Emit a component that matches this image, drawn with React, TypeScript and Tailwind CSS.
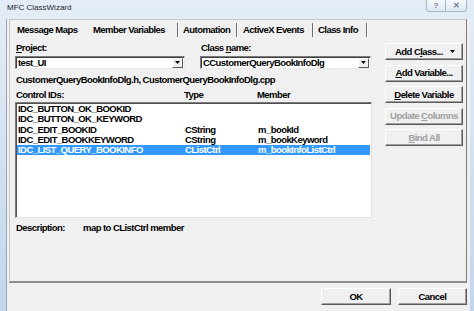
import React from "react";

const rows = [
  { id: "IDC_BUTTON_OK_BOOKID", type: "", member: "" },
  { id: "IDC_BUTTON_OK_KEYWORD", type: "", member: "" },
  { id: "IDC_EDIT_BOOKID", type: "CString", member: "m_bookId" },
  { id: "IDC_EDIT_BOOKKEYWORD", type: "CString", member: "m_bookKeyword" },
  { id: "IDC_LIST_QUERY_BOOKINFO", type: "CListCtrl", member: "m_bookInfoListCtrl", selected: true },
];

const btn =
  "flex h-[17px] items-center justify-center border border-t-white border-l-white border-b-[#5a5a5a] border-r-[#5a5a5a] bg-[#f0f0f0] shadow-[inset_-1px_-1px_0_#a0a0a0] leading-[10px]";

function Arrow() {
  return (
    <svg width="5" height="3" viewBox="0 0 5 3">
      <path d="M0 0H5L2.5 3Z" fill="#000" />
    </svg>
  );
}

function Combo({ text, w }: { text: string; w: string }) {
  return (
    <div
      className={`flex h-[13px] ${w} items-center border border-t-[#7a7a7a] border-l-[#7a7a7a] border-b-[#e8e8e8] border-r-[#e8e8e8] bg-white shadow-[inset_1px_1px_0_#404040]`}
    >
      <span className="pl-[2px] leading-[10px]">{text}</span>
      <div className="ml-auto mr-[1px] flex h-[10px] w-[11px] items-center justify-center border border-t-white border-l-white border-b-[#5a5a5a] border-r-[#5a5a5a] bg-[#f0f0f0]">
        <Arrow />
      </div>
    </div>
  );
}

function Sep() {
  return <div className="h-[14px] w-[2px] self-end border-l border-l-[#6d6d6d] border-r border-r-white" />;
}

export default function App() {
  return (
    <div className="h-[311px] w-[474px] overflow-hidden bg-gradient-to-b from-[#e4edf7] to-[#c2d6ec] font-['Liberation_Sans',Arial,sans-serif] text-black">
      {/* caption */}
      <div className="flex h-[16px] items-start">
        <div className="pl-[7px] pt-[3px] text-[8px] leading-[10px] text-[#1e1e1e]">MFC ClassWizard</div>
        <div className="ml-auto mr-[7px] flex h-[12px] rounded-b-[3px] border border-t-0 border-[#a4b5ca] bg-gradient-to-b from-[#f6f9fc] to-[#dde7f2]">
          <div className="flex w-[19px] items-center justify-center border-r border-[#a4b5ca] text-[8px] font-bold leading-[8px] text-[#6b7b90]">
            ?
          </div>
          <div className="flex w-[20px] items-center justify-center text-[8px] font-bold leading-[8px] text-[#6b7b90]">
            ✕
          </div>
        </div>
      </div>

      {/* client */}
      <div className="ml-[6px] h-[293px] w-[464px] border-b border-l border-[#9aa6b4] bg-[#f0f0f0] text-[9.5px] font-bold tracking-[-0.55px]">
        {/* property sheet panel */}
        <div className="ml-[2px] mt-[3px] h-[264px] w-[458px] border border-t-[#c8c8c8] border-l-[#c8c8c8] border-r-[#7a7a7a] border-b-2 border-b-[#8c8c8c]">
          {/* tabs */}
          <div className="flex h-[17px] items-start">
            <div className="w-[76px] pl-[7px] pt-[5px] leading-[10px]">Message Maps</div>
            <div className="w-[91px] pl-[7px] pt-[5px] leading-[10px]">Member Variables</div>
            <Sep />
            <div className="w-[57px] pl-[4px] pt-[5px] leading-[10px]">Automation</div>
            <Sep />
            <div className="w-[74px] pl-[5px] pt-[5px] leading-[10px]">ActiveX Events</div>
            <Sep />
            <div className="w-[52px] pl-[4px] pt-[5px] leading-[10px]">Class Info</div>
            <Sep />
          </div>

          <div className="flex gap-[13px] pl-[5px] pt-[6px]">
            {/* left column */}
            <div className="flex w-[357px] flex-col">
              <div className="flex leading-[10px]">
                <div className="w-[185px] pl-[1px]">
                  <u>P</u>roject:
                </div>
                <div className="pl-[1px]">
                  Class <u>n</u>ame:
                </div>
              </div>
              <div className="mt-[3px] flex gap-[15px]">
                <Combo text="test_UI" w="w-[170px]" />
                <Combo text="CCustomerQueryBookInfoDlg" w="w-[171px]" />
              </div>
              <div className="mt-[6px] pl-[1px] leading-[10px]">
                CustomerQueryBookInfoDlg.h, CustomerQueryBookInfoDlg.cpp
              </div>
              <div className="mt-[5px] grid grid-cols-[168px_73px_1fr] pl-[1px] leading-[10px]">
                <div>Control IDs:</div>
                <div>Type</div>
                <div>Member</div>
              </div>
              <div className="mt-[2px] h-[116px] border border-t-[#7a7a7a] border-l-[#7a7a7a] border-b-[#e0e0e0] border-r-[#e0e0e0] bg-white pt-[1px] shadow-[inset_1px_1px_0_#505050]">
                {rows.map((r) => (
                  <div
                    key={r.id}
                    className={`ml-[1px] mr-[1px] grid h-[10.25px] grid-cols-[167px_73px_1fr] pl-[1px] leading-[10.25px] ${
                      r.selected ? "bg-[#3399ff] text-white" : ""
                    }`}
                  >
                    <div>{r.id}</div>
                    <div>{r.type}</div>
                    <div>{r.member}</div>
                  </div>
                ))}
              </div>
              <div className="mt-[5px] grid grid-cols-[67px_1fr] pl-[1px] leading-[10px]">
                <div>Description:</div>
                <div>map to CListCtrl member</div>
              </div>
            </div>

            {/* right buttons */}
            <div className="flex w-[78px] flex-col gap-[4.5px]">
              <div className={btn}>
                <span className="ml-[9px]">
                  Add C<u>l</u>ass...
                </span>
                <span className="ml-auto mr-[7px] flex">
                  <Arrow />
                </span>
              </div>
              <div className={btn}>
                <span>
                  <u>A</u>dd Variable...
                </span>
              </div>
              <div className={btn}>
                <span>
                  <u>D</u>elete Variable
                </span>
              </div>
              <div className={`${btn} text-[#a0a0a0]`}>
                <span>
                  Update <u>C</u>olumns
                </span>
              </div>
              <div className={`${btn} text-[#a0a0a0]`}>
                <span>
                  <u>B</u>ind All
                </span>
              </div>
            </div>
          </div>
        </div>

        {/* dialog buttons */}
        <div className="mt-[5px] flex justify-end gap-[7px] pr-[3px]">
          <div className={`${btn} w-[70px]`}>OK</div>
          <div className={`${btn} w-[69px]`}>Cancel</div>
        </div>
      </div>
    </div>
  );
}
